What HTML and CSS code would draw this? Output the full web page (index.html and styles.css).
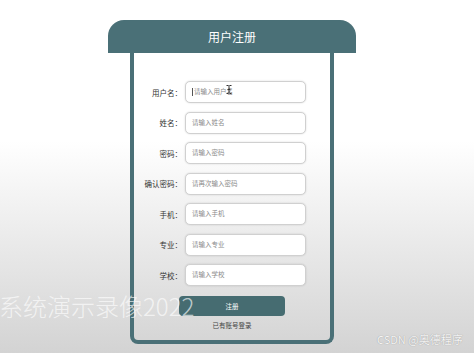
FILE: index.html
```html
<!DOCTYPE html>
<html lang="zh">
<head>
<meta charset="utf-8">
<link rel="stylesheet" href="styles.css">
</head>
<body>
<div class="page">
  <div class="panel">
    <div class="head">用户注册</div>
    <div class="card">
      <div class="rows">
        <div class="row"><span class="lbl">用户名：</span><div class="inp"><span class="caret"></span>请输入用户名</div></div>
        <div class="row"><span class="lbl">姓名：</span><div class="inp">请输入姓名</div></div>
        <div class="row"><span class="lbl">密码：</span><div class="inp">请输入密码</div></div>
        <div class="row"><span class="lbl">确认密码：</span><div class="inp">请再次输入密码</div></div>
        <div class="row"><span class="lbl">手机：</span><div class="inp">请输入手机</div></div>
        <div class="row"><span class="lbl">专业：</span><div class="inp">请输入专业</div></div>
        <div class="row"><span class="lbl">学校：</span><div class="inp">请输入学校</div></div>
      </div>
      <div class="btn">注册</div>
      <div class="link">已有账号登录</div>
    </div>
  </div>
  <svg class="ibeam" width="6" height="9" viewBox="0 0 6 9"><path d="M0.5 0.5h2M3.5 0.5h2M3 0.5v8M0.5 8.5h2M3.5 8.5h2M1.5 4.5h3" stroke="#333" stroke-width="1" fill="none"/></svg>
  <div class="wm">系统演示录像2022</div>
  <div class="csdn">CSDN @奥德程序</div>
</div>
</body>
</html>
```
FILE: styles.css
```css
html, body {
  margin: 0;
  padding: 0;
}
body {
  width: 474px;
  height: 353px;
  overflow: hidden;
  background: linear-gradient(#ffffff 0, #ffffff 40%, #d3d3d3 100%);
  font-family: "Noto Sans CJK SC", "Noto Sans", sans-serif;
}
.page {
  position: relative;
  width: 474px;
  height: 353px;
  padding-top: 20px;
  box-sizing: border-box;
}
.panel {
  margin-left: 108px;
  width: 248px;
  display: flex;
  flex-direction: column;
  align-items: center;
}
.head {
  width: 248px;
  height: 33px;
  background: #4a7077;
  border-radius: 16px 16px 0 0;
  color: #fff;
  font-size: 12px;
  line-height: 33px;
  text-align: center;
}
.card {
  width: 196px;
  border: 4px solid #4a7077;
  border-top: none;
  border-radius: 0 0 8px 8px;
  padding: 28px 0 10px;
  display: flex;
  flex-direction: column;
  align-items: center;
}
.rows {
  display: flex;
  flex-direction: column;
  gap: 8.5px;
  width: 196px;
}
.row {
  display: flex;
  align-items: center;
  height: 22px;
}
.lbl {
  width: 48px;
  text-align: right;
  font-size: 7.5px;
  color: #333;
  margin-right: 3px;
  white-space: nowrap;
}
.inp {
  position: relative;
  box-sizing: border-box;
  width: 121px;
  height: 22px;
  border: 1.5px solid #d0d0d0;
  border-radius: 5px;
  background: #fff;
  box-shadow: 0 0 2px rgba(0,0,0,0.15);
  font-size: 6.5px;
  color: #8a8a8a;
  line-height: 19px;
  padding-left: 6px;
}
.caret {
  display: inline-block;
  width: 0;
  height: 8px;
  border-left: 1px solid #555;
  vertical-align: middle;
  margin-right: 1px;
}
.btn {
  margin-top: 10px;
  width: 106px;
  height: 20px;
  background: #466c71;
  border-radius: 4px;
  color: #fff;
  font-size: 6.5px;
  line-height: 20px;
  text-align: center;
}
.link {
  margin-top: 4px;
  font-size: 6.5px;
  color: #444;
  line-height: 10px;
}
.ibeam {
  position: absolute;
  left: 226px;
  top: 85px;
}
.wm {
  position: absolute;
  left: -1px;
  top: 290px;
  font-size: 24px;
  line-height: 32px;
  font-weight: 300;
  color: rgba(255,255,255,0.65);
  white-space: nowrap;
}
.csdn {
  position: absolute;
  left: 377px;
  top: 332px;
  font-size: 11px;
  line-height: 15px;
  color: #f4f4f4;
  text-shadow: 0 0 1px #8a8a8a;
  white-space: nowrap;
}
```
